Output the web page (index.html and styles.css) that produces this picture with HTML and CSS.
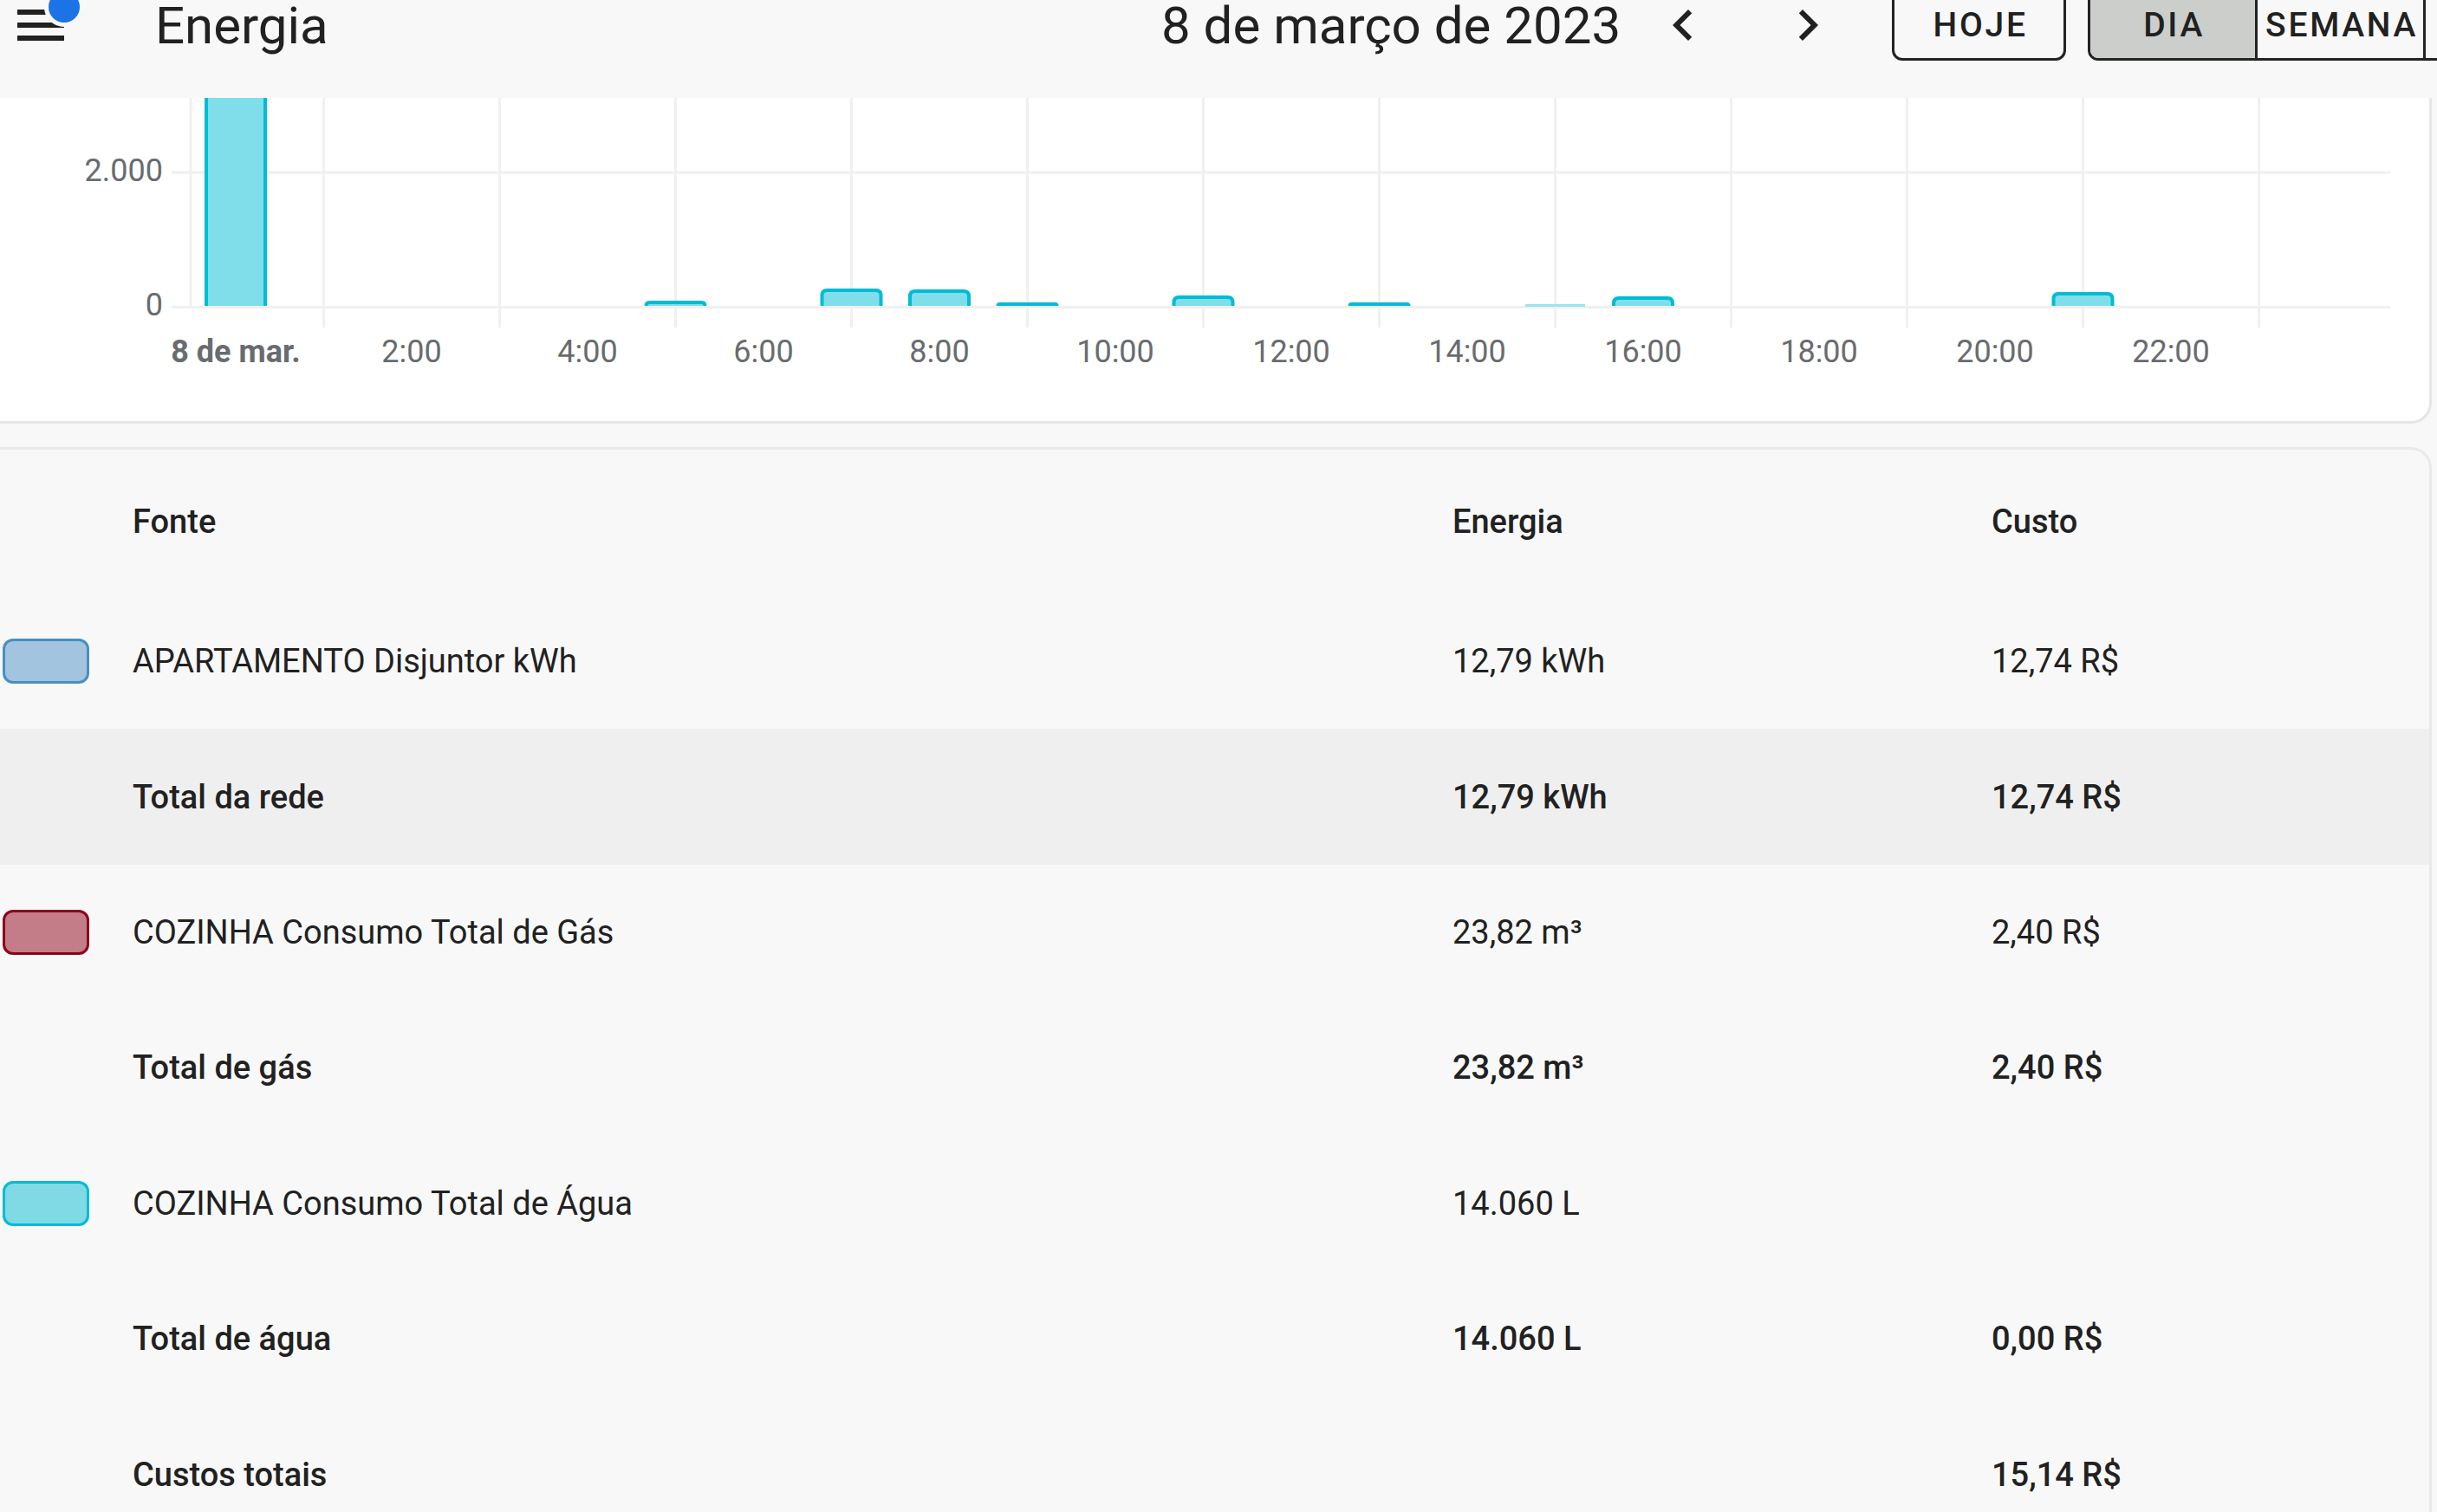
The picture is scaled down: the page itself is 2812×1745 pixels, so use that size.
FILE: index.html
```html
<!DOCTYPE html>
<html lang="pt-BR">
<head>
<meta charset="utf-8">
<title>Energia</title>
<link rel="stylesheet" href="styles.css">
</head>
<body>
<header class="toolbar">
  <div class="menu-btn">
    <svg class="icon" viewBox="0 0 24 24"><path d="M3,6H21V8H3V6M3,11H21V13H3V11M3,16H21V18H3V16Z"/></svg>
    <span class="badge"></span>
  </div>
  <div class="title">Energia</div>
  <div class="date">8 de março de 2023</div>
  <div class="icon-btn"><svg class="icon" viewBox="0 0 24 24"><path d="M15.41,16.58L10.83,12L15.41,7.41L14,6L8,12L14,18L15.41,16.58Z"/></svg></div>
  <div class="icon-btn"><svg class="icon" viewBox="0 0 24 24"><path d="M8.59,16.58L13.17,12L8.59,7.41L10,6L16,12L10,18L8.59,16.58Z"/></svg></div>
  <div class="btn-outline">HOJE</div>
  <div class="toggle">
    <div class="seg active">DIA</div>
    <div class="seg">SEMANA</div>
    <div class="seg">MÊS</div>
    <div class="seg">ANO</div>
  </div>
</header>

<section class="card chart-card">
  <svg class="chart" width="2830" height="373" viewBox="-27 113 2830 373">
    <g class="grid">
      <line x1="198" y1="199" x2="2758" y2="199"/>
      <line x1="198" y1="354.5" x2="2758" y2="354.5"/>
      <line x1="220" y1="113" x2="220" y2="353"/>
      <line x1="373.5" y1="113" x2="373.5" y2="378"/>
      <line x1="576.5" y1="113" x2="576.5" y2="378"/>
      <line x1="779.5" y1="113" x2="779.5" y2="378"/>
      <line x1="982.5" y1="113" x2="982.5" y2="378"/>
      <line x1="1185.5" y1="113" x2="1185.5" y2="378"/>
      <line x1="1388.5" y1="113" x2="1388.5" y2="378"/>
      <line x1="1591.5" y1="113" x2="1591.5" y2="378"/>
      <line x1="1794.5" y1="113" x2="1794.5" y2="378"/>
      <line x1="1997.5" y1="113" x2="1997.5" y2="378"/>
      <line x1="2200.5" y1="113" x2="2200.5" y2="378"/>
      <line x1="2403.5" y1="113" x2="2403.5" y2="378"/>
      <line x1="2606.5" y1="113" x2="2606.5" y2="378"/>
    </g>
    <g class="bars">
      <path d="M238 353 V106 Q238 100 244 100 H300 Q306 100 306 106 V353"/>
      <path d="M745.5 353 Q745.5 349 749.5 349 H809.5 Q813.5 349 813.5 353"/>
      <path d="M948.5 353 V341 Q948.5 335 954.5 335 H1010.5 Q1016.5 335 1016.5 341 V353"/>
      <path d="M1050 353 V342 Q1050 336 1056 336 H1112 Q1118 336 1118 342 V353"/>
      <path d="M1151.5 353 Q1151.5 351 1153.5 351 H1217.5 Q1219.5 351 1219.5 353"/>
      <path d="M1354.5 353 V349 Q1354.5 343 1360.5 343 H1416.5 Q1422.5 343 1422.5 349 V353"/>
      <path d="M1557.5 353 Q1557.5 351 1559.5 351 H1623.5 Q1625.5 351 1625.5 353"/>
      <path d="M1862 353 V350 Q1862 344 1868 344 H1924 Q1930 344 1930 350 V353"/>
      <path d="M2369.5 353 V345 Q2369.5 339 2375.5 339 H2431.5 Q2437.5 339 2437.5 345 V353"/>
    </g>
    <line class="faint-bar" x1="1760" y1="352.5" x2="1829" y2="352.5"/>
    <g class="ylabels">
      <text x="188" y="209">2.000</text>
      <text x="188" y="364">0</text>
    </g>
    <g class="xlabels">
      <text class="bold" x="272" y="418">8 de mar.</text>
      <text x="475" y="418">2:00</text>
      <text x="678" y="418">4:00</text>
      <text x="881" y="418">6:00</text>
      <text x="1084" y="418">8:00</text>
      <text x="1287" y="418">10:00</text>
      <text x="1490" y="418">12:00</text>
      <text x="1693" y="418">14:00</text>
      <text x="1896" y="418">16:00</text>
      <text x="2099" y="418">18:00</text>
      <text x="2302" y="418">20:00</text>
      <text x="2505" y="418">22:00</text>
    </g>
  </svg>
</section>

<section class="card table-card">
  <div class="row head">
    <div></div><div>Fonte</div><div>Energia</div><div>Custo</div>
  </div>
  <div class="row">
    <div class="swatch-cell"><span class="swatch grid-color"></span></div>
    <div>APARTAMENTO Disjuntor kWh</div><div>12,79 kWh</div><div>12,74 R$</div>
  </div>
  <div class="row total highlight">
    <div></div><div>Total da rede</div><div>12,79 kWh</div><div>12,74 R$</div>
  </div>
  <div class="row">
    <div class="swatch-cell"><span class="swatch gas-color"></span></div>
    <div>COZINHA Consumo Total de Gás</div><div>23,82 m³</div><div>2,40 R$</div>
  </div>
  <div class="row total">
    <div></div><div>Total de gás</div><div>23,82 m³</div><div>2,40 R$</div>
  </div>
  <div class="row">
    <div class="swatch-cell"><span class="swatch water-color"></span></div>
    <div>COZINHA Consumo Total de Água</div><div>14.060 L</div><div></div>
  </div>
  <div class="row total">
    <div></div><div>Total de água</div><div>14.060 L</div><div>0,00 R$</div>
  </div>
  <div class="row total">
    <div></div><div>Custos totais</div><div></div><div>15,14 R$</div>
  </div>
</section>
</body>
</html>
```

FILE: styles.css
```css
html, body {
  margin: 0;
  padding: 0;
}

body {
  width: 2812px;
  height: 1745px;
  overflow: hidden;
  background: #f8f8f8;
  font-family: Roboto, "Noto Sans", "Liberation Sans", sans-serif;
  color: #212121;
}

/* ---------- toolbar ---------- */
.toolbar {
  display: flex;
  align-items: center;
  height: 168px;
  margin-top: -55px;
  background: #f8f8f8;
  white-space: nowrap;
  overflow: hidden;
  position: relative;
  z-index: 1;
}

.icon {
  width: 72px;
  height: 72px;
  fill: #212121;
  display: block;
}

.menu-btn {
  position: relative;
  flex-shrink: 0;
  width: 144px;
  height: 144px;
  margin-left: -25px;
  display: flex;
  align-items: center;
  justify-content: center;
}

.badge {
  position: absolute;
  left: 76px;
  top: 28px;
  width: 36px;
  height: 36px;
  border-radius: 50%;
  background: #1b73e6;
  border: 5px solid #f8f8f8;
}

.title {
  flex-shrink: 0;
  width: 1161px;
  margin-left: 60px;
  font-size: 60px;
  font-weight: 400;
}

.date {
  flex-shrink: 0;
  font-size: 60px;
  font-weight: 400;
}

.icon-btn {
  flex-shrink: 0;
  width: 144px;
  height: 144px;
  display: flex;
  align-items: center;
  justify-content: center;
}

.btn-outline {
  flex-shrink: 0;
  box-sizing: border-box;
  width: 201px;
  height: 82px;
  margin-left: 25px;
  border: 3px solid #232323;
  border-radius: 12px;
  display: flex;
  align-items: center;
  justify-content: center;
  padding-left: 3px;
  font-size: 39px;
  font-weight: 500;
  letter-spacing: 2.7px;
}

.toggle {
  flex-shrink: 0;
  display: flex;
  height: 82px;
  box-sizing: border-box;
  margin-left: 25px;
  border: 3px solid #232323;
  border-radius: 12px;
  overflow: hidden;
}

.seg {
  box-sizing: border-box;
  min-width: 190px;
  padding: 0 6px 0 9px;
  display: flex;
  align-items: center;
  justify-content: center;
  font-size: 39px;
  font-weight: 500;
  letter-spacing: 2.7px;
  border-left: 3px solid #232323;
}

.seg:first-child {
  border-left: none;
}

.seg.active {
  background: #cccecc;
}

/* ---------- cards ---------- */
.card {
  margin-left: -30px;
  margin-right: 6px;
  box-sizing: border-box;
  border: 3px solid #e6e6e6;
}

.chart-card {
  height: 376px;
  background: #ffffff;
  border-top: none;
  border-bottom-right-radius: 24px;
  overflow: hidden;
}

.chart {
  display: block;
}

.grid line {
  stroke: #f0f0f0;
  stroke-width: 3;
}

.bars path {
  fill: #80deea;
  stroke: #00bcd4;
  stroke-width: 4;
}

.faint-bar {
  stroke: #9fe3ec;
  stroke-width: 3;
}

.ylabels text,
.xlabels text {
  font-family: Roboto, "Noto Sans", sans-serif;
  font-size: 36px;
  fill: #686c70;
}

.ylabels text {
  text-anchor: end;
}

.xlabels text {
  text-anchor: middle;
}

.xlabels text.bold {
  font-weight: 700;
}

.table-card {
  margin-top: 27px;
  height: 1300px;
  background: #f8f8f8;
  border-bottom: none;
  border-top-right-radius: 24px;
  border-color: #e9e9e9;
}

.row {
  display: grid;
  grid-template-columns: 180px 1523px 622px 1fr;
  align-items: center;
  height: 156.4px;
  font-size: 38px;
  font-weight: 400;
  white-space: nowrap;
}

.row.head {
  height: 166px;
  font-weight: 500;
}

.row.total {
  font-weight: 500;
}

.row.highlight {
  background: #efefef;
}

.swatch-cell {
  padding-left: 30px;
  display: flex;
  align-items: center;
}

.swatch {
  display: block;
  box-sizing: border-box;
  width: 100px;
  height: 52px;
  border-radius: 12px;
  border: 3px solid;
}

.grid-color {
  border-color: #488fc2;
  background: #a3c4de;
}

.gas-color {
  border-color: #8e021b;
  background: #c37d89;
}

.water-color {
  border-color: #00bcd4;
  background: #7fdae6;
}
```
